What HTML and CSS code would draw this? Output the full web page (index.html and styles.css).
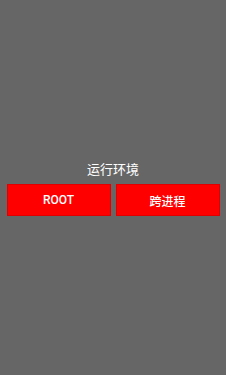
FILE: index.html
```html
<!DOCTYPE html>
<html lang="zh">
<head>
    <meta charset="UTF-8">
    <meta name="viewport" content="width=device-width, initial-scale=1.0">
    <title>运行环境</title>
    <link rel="stylesheet" href="styles.css">
</head>
<body>
    <div id="wrap">
        <p class="title">运行环境</p>
        <div class="btns">
            <div class="btn">ROOT</div>
            <div class="btn">跨进程</div>
        </div>
    </div>
</body>
</html>
```

FILE: styles.css
```css
* {
    margin: 0;
    padding: 0;
}
html, body {
    height: 100%;
}
body {
    background-color: #666666;
    font-family: Roboto, "Noto Sans CJK SC", sans-serif;
    display: flex;
    justify-content: center;
    align-items: center;
}
#wrap {
    width: 213px;
    margin-top: 2px;
}
.title {
    color: #ffffff;
    font-size: 13px;
    text-align: center;
    line-height: 18px;
    margin-bottom: 5px;
}
.btns {
    display: flex;
    gap: 5px;
}
.btn {
    flex: 1;
    height: 30px;
    background-color: #ff0000;
    border: 1px solid #e00000;
    color: #ffffff;
    font-size: 12px;
    font-weight: 500;
    display: flex;
    justify-content: center;
    align-items: center;
}
```
